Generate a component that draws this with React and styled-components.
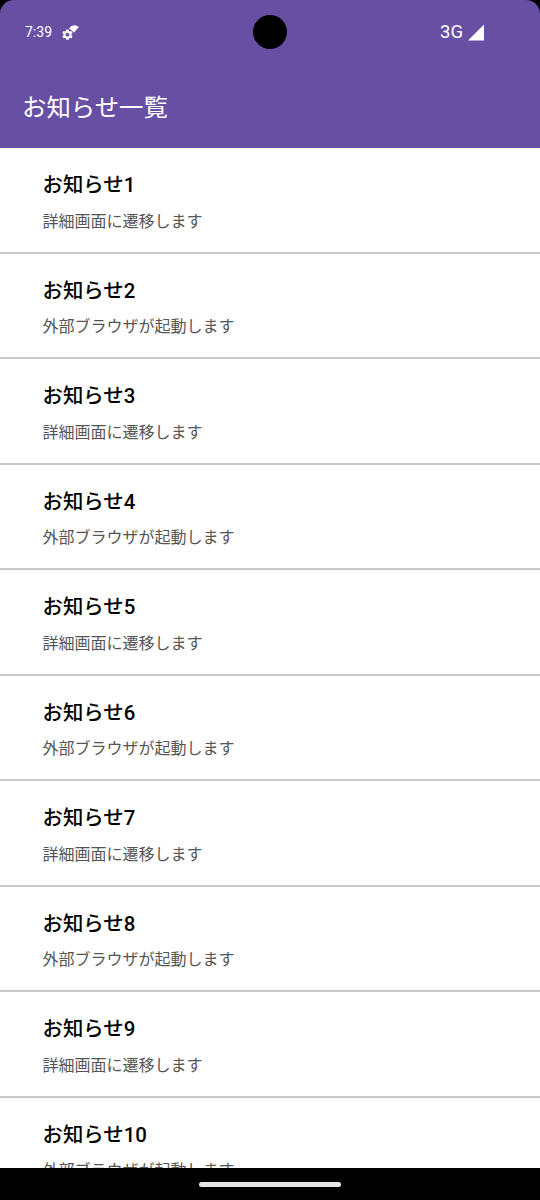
import styled, { createGlobalStyle } from "styled-components";

const GlobalStyle = createGlobalStyle`
  html, body {
    margin: 0;
    padding: 0;
    background: #000;
  }
  body {
    font-family: Roboto, "Noto Sans CJK JP", sans-serif;
  }
`;

const Screen = styled.div`
  width: 540px;
  height: 1200px;
  background: #000;
  display: flex;
  flex-direction: column;
  overflow: hidden;
`;

const Header = styled.header`
  height: 148px;
  flex: none;
  background: #6750a4;
  border-radius: 14px 14px 0 0;
  display: flex;
  flex-direction: column;
`;

const StatusBar = styled.div`
  height: 64px;
  padding: 0 56px 0 25px;
  display: flex;
  align-items: center;
  justify-content: space-between;
  color: #fff;
  font-size: 14px;
  position: relative;
`;

const StatusLeft = styled.div`
  display: flex;
  align-items: center;
  gap: 9px;
`;

const StatusRight = styled.div`
  display: flex;
  align-items: center;
  gap: 5px;
  font-size: 18.5px;
`;

const Camera = styled.div`
  position: absolute;
  left: 253px;
  top: 15px;
  width: 34px;
  height: 34px;
  border-radius: 50%;
  background: #000;
`;

const Title = styled.h1`
  margin: 0;
  padding: 0 0 0 22px;
  height: 84px;
  line-height: 88px;
  font-size: 24.4px;
  font-weight: 400;
  color: #fff;
`;

const List = styled.ul`
  flex: 1;
  min-height: 0;
  margin: 0;
  padding: 0;
  list-style: none;
  background: #fff;
  overflow: hidden;
`;

const Item = styled.li`
  height: 105.5px;
  padding: 22px 0 0 42.5px;
  box-sizing: border-box;
  border-bottom: 2px solid #cac8cc;
`;

const ItemTitle = styled.div`
  font-size: 20.4px;
  line-height: 30px;
  font-weight: 500;
  color: #000;
`;

const ItemBody = styled.div`
  margin-top: 10.5px;
  font-size: 16px;
  line-height: 22px;
  color: #555;
`;

const NavBar = styled.div`
  height: 32px;
  flex: none;
  background: #000;
  display: flex;
  align-items: center;
  justify-content: center;
`;

const Handle = styled.div`
  width: 142px;
  height: 5px;
  border-radius: 3px;
  background: #e6e6e6;
`;

const items = [1, 2, 3, 4, 5, 6, 7, 8, 9, 10].map((n) => ({
  title: `お知らせ${n}`,
  body: n % 2 === 1 ? "詳細画面に遷移します" : "外部ブラウザが起動します",
}));

function App() {
  return (
    <Screen>
      <GlobalStyle />
      <Header>
        <StatusBar>
          <StatusLeft>
            <span>7:39</span>
            <svg width="18" height="17" viewBox="0 0 18 17" fill="#fff">
              <g transform="translate(0 4.2) scale(0.54)">
                <path d="M19.14 12.94c.04-.3.06-.61.06-.94 0-.32-.02-.64-.07-.94l2.03-1.58a.49.49 0 0 0 .12-.61l-1.92-3.32a.488.488 0 0 0-.59-.22l-2.39.96c-.5-.38-1.03-.7-1.62-.94l-.36-2.54a.484.484 0 0 0-.48-.41h-3.84c-.24 0-.43.17-.47.41l-.36 2.54c-.59.24-1.13.57-1.62.94l-2.39-.96c-.22-.08-.47 0-.59.22L2.74 8.87c-.12.21-.08.47.12.61l2.03 1.58c-.05.3-.09.63-.09.94s.02.64.07.94l-2.03 1.58a.49.49 0 0 0-.12.61l1.92 3.32c.12.22.37.29.59.22l2.39-.96c.5.38 1.03.7 1.62.94l.36 2.54c.05.24.24.41.48.41h3.84c.24 0 .44-.17.47-.41l.36-2.54c.59-.24 1.13-.56 1.62-.94l2.39.96c.22.08.47 0 .59-.22l1.92-3.32c.12-.22.07-.47-.12-.61l-2.01-1.58zM12 15.6c-1.98 0-3.6-1.62-3.6-3.6s1.62-3.6 3.6-3.6 3.6 1.62 3.6 3.6-1.62 3.6-3.6 3.6z" />
              </g>
              <path d="M8 4.2Q12.5 -0.8 18 3L13 8.5Z" />
            </svg>
          </StatusLeft>
          <Camera />
          <StatusRight>
            <span>3G</span>
            <svg width="16" height="17" viewBox="0 0 16 17" fill="#fff">
              <path d="M16 0.5v16H0z" />
            </svg>
          </StatusRight>
        </StatusBar>
        <Title>お知らせ一覧</Title>
      </Header>
      <List>
        {items.map((item) => (
          <Item key={item.title}>
            <ItemTitle>{item.title}</ItemTitle>
            <ItemBody>{item.body}</ItemBody>
          </Item>
        ))}
      </List>
      <NavBar>
        <Handle />
      </NavBar>
    </Screen>
  );
}

export default App;
